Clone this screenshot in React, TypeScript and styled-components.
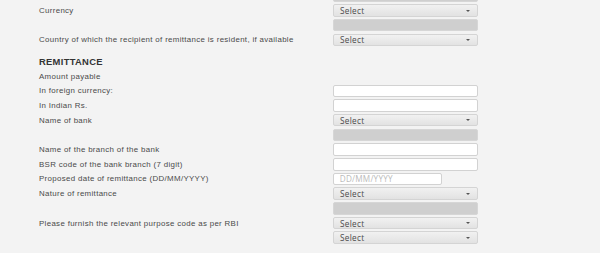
import React from "react";
import styled, { createGlobalStyle } from "styled-components";

const GlobalStyle = createGlobalStyle`
  html, body { margin: 0; padding: 0; background: #f3f3f3; }
  body { font-family: "Liberation Sans", Arial, sans-serif; overflow: hidden; }
`;

const Page = styled.div({
  width: 600,
  height: 253,
  overflow: "hidden",
  background: "#f3f3f3",
});

const Form = styled.div({
  marginTop: -10.4,
  paddingLeft: 39,
  display: "flex",
  flexDirection: "column",
  gap: 2.2,
});

const Row = styled.div<{ $gapBefore?: number }>`
  display: grid;
  grid-template-columns: 294.3px 144.7px;
  align-items: center;
  height: 12.5px;
  margin-top: ${(p) => p.$gapBefore ?? 0}px;
`;

const Label = styled.div({
  fontSize: 7.9,
  color: "#4a4a4a",
  whiteSpace: "nowrap",
  letterSpacing: 0.33,
});

const Heading = styled.div({
  fontSize: 9.4,
  fontWeight: "bold",
  color: "#333",
  letterSpacing: 0.3,
});

const fieldBase = {
  boxSizing: "border-box" as const,
  height: 12.5,
  borderRadius: 2,
  fontFamily: '"Open Sans", "Liberation Sans", sans-serif',
  fontSize: 8.2,
  letterSpacing: 0.3,
};

const SelectBox = styled.div({
  ...fieldBase,
  display: "flex",
  alignItems: "center",
  justifyContent: "space-between",
  padding: "0 6px 0 5.7px",
  border: "1px solid #d4d4d4",
  background: "linear-gradient(#f1f1f1, #e2e2e2)",
  color: "#4a4a4a",
});

const Caret = styled.span({
  width: 0,
  height: 0,
  borderLeft: "2.5px solid transparent",
  borderRight: "2.5px solid transparent",
  borderTop: "2.5px solid #555",
  marginRight: 1,
});

const Disabled = styled.div({
  ...fieldBase,
  border: "1px solid #d6d6d6",
  background: "#cfcfcf",
});

const TextInput = styled.div<{ $w?: number }>`
  box-sizing: border-box;
  height: 12.5px;
  width: ${(p) => (p.$w ? `${p.$w}px` : "auto")};
  border: 1px solid #d2d2d2;
  border-radius: 2px;
  background: #fff;
  font-family: "Open Sans", "Liberation Sans", sans-serif;
  font-size: 8.2px;
  letter-spacing: 0.2px;
  color: #bbb;
  display: flex;
  align-items: center;
  padding-left: 5.5px;
`;

const Select = () => (
  <SelectBox>
    Select
    <Caret />
  </SelectBox>
);

const App = () => (
  <Page>
    <GlobalStyle />
    <Form>
      <Row>
        <span />
        <Disabled />
      </Row>
      <Row>
        <Label>Currency</Label>
        <Select />
      </Row>
      <Row>
        <span />
        <Disabled />
      </Row>
      <Row>
        <Label>Country of which the recipient of remittance is resident, if available</Label>
        <Select />
      </Row>
      <Row $gapBefore={6.85}>
        <Heading>REMITTANCE</Heading>
      </Row>
      <Row>
        <Label>Amount payable</Label>
      </Row>
      <Row>
        <Label>In foreign currency:</Label>
        <TextInput />
      </Row>
      <Row>
        <Label>In Indian Rs.</Label>
        <TextInput />
      </Row>
      <Row>
        <Label>Name of bank</Label>
        <Select />
      </Row>
      <Row>
        <span />
        <Disabled />
      </Row>
      <Row>
        <Label>Name of the branch of the bank</Label>
        <TextInput />
      </Row>
      <Row>
        <Label>BSR code of the bank branch (7 digit)</Label>
        <TextInput />
      </Row>
      <Row>
        <Label>Proposed date of remittance (DD/MM/YYYY)</Label>
        <TextInput $w={108.5}>DD/MM/YYYY</TextInput>
      </Row>
      <Row>
        <Label>Nature of remittance</Label>
        <Select />
      </Row>
      <Row>
        <span />
        <Disabled />
      </Row>
      <Row>
        <Label>Please furnish the relevant purpose code as per RBI</Label>
        <Select />
      </Row>
      <Row>
        <span />
        <Select />
      </Row>
    </Form>
  </Page>
);

export default App;
